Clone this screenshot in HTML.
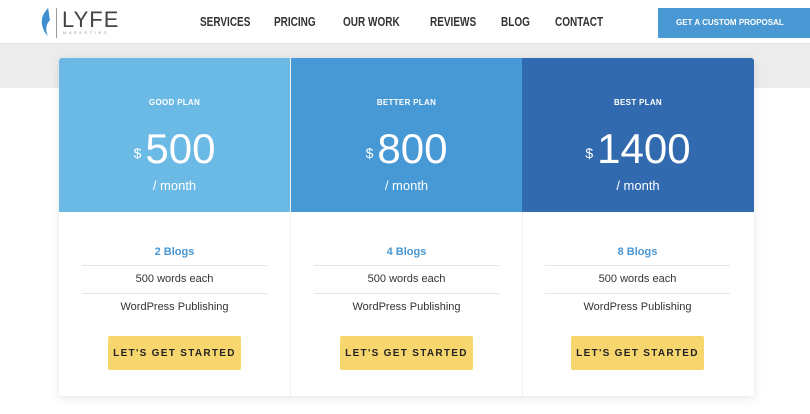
<!DOCTYPE html>
<html><head><style>
*{margin:0;padding:0;box-sizing:border-box}
body{width:810px;height:414px;overflow:hidden;background:#fff;font-family:"Liberation Sans",sans-serif;position:relative}
.hdr{position:absolute;left:0;top:0;width:810px;height:44px;background:#fff;border-bottom:1px solid #e4e4e4}
.band{position:absolute;left:0;top:44px;width:810px;height:44px;background:#ececec}
.nav{position:absolute;top:15px;font-size:12.5px;font-weight:bold;color:#333;transform:scaleX(.8);transform-origin:0 0;white-space:nowrap}
.cta{position:absolute;left:658px;top:8px;width:152px;height:30px;background:#4a98d3;color:#fff;font-size:8px;font-weight:bold;line-height:30px;padding-left:18px}
.card{position:absolute;left:59px;top:58px;width:695px;height:338px;background:#fff;box-shadow:0 2px 10px rgba(0,0,0,.1);border-radius:3px;overflow:hidden}
.col{position:absolute;top:0;width:232px;height:338px;text-align:center;border-right:1px solid #f0f0f0}
.top{height:154px;color:#fff;position:relative}
.lbl{position:absolute;top:40px;width:100%;font-size:8px;font-weight:bold;letter-spacing:.3px}
.pr{position:absolute;top:67px;width:100%;font-size:42px;line-height:48px}
.pr sup{font-size:14px;vertical-align:top;position:relative;top:4px;margin-right:4px}
.mo{position:absolute;top:120px;width:100%;font-size:13px}
.f{position:absolute;left:23px;width:185px;font-size:11px;color:#333}
.b1{top:188px;color:#4a98d3;font-weight:bold}
.ln{position:absolute;left:23px;width:185px;height:1px;background:#e6e6e6}
.btn{position:absolute;left:49px;top:278px;width:133px;height:34px;background:#f7d66e;border-radius:2px;font-size:10px;font-weight:bold;letter-spacing:1.3px;line-height:36px;color:#222}
</style></head><body>
<div class="hdr"></div>
<svg style="position:absolute;left:40px;top:8px" width="14" height="28" viewBox="0 0 14 28"><path d="M8 0C3 6 0 11 3 20c1 4 3 6 5 8C5 22 6 16 10 12 9 8 9 4 8 0z" fill="#3f8fd0"/></svg>
<div style="position:absolute;left:56px;top:8px;width:1px;height:30px;background:#999"></div>
<div style="position:absolute;left:62px;top:7px;font-size:22px;color:#444;letter-spacing:1px">LYFE</div>
<div style="position:absolute;left:63px;top:30px;font-size:4px;color:#999;letter-spacing:2.5px">MARKETING</div>
<div class="nav" style="left:200px">SERVICES</div>
<div class="nav" style="left:274px">PRICING</div>
<div class="nav" style="left:343px">OUR WORK</div>
<div class="nav" style="left:430px">REVIEWS</div>
<div class="nav" style="left:501px">BLOG</div>
<div class="nav" style="left:555px">CONTACT</div>
<div class="cta">GET A CUSTOM PROPOSAL</div>
<div class="band"></div>
<div class="card">
<div class="col" style="left:0"><div class="top" style="background:#6bbae6"><div class="lbl">GOOD PLAN</div><div class="pr"><sup>$</sup>500</div><div class="mo">/ month</div></div>
<div class="f b1">2 Blogs</div><div class="ln" style="top:207px"></div><div class="f" style="top:215px">500 words each</div><div class="ln" style="top:235px"></div><div class="f" style="top:243px">WordPress Publishing</div><div class="btn">LET'S GET STARTED</div></div>
<div class="col" style="left:232px"><div class="top" style="background:#4699d4"><div class="lbl">BETTER PLAN</div><div class="pr"><sup>$</sup>800</div><div class="mo">/ month</div></div>
<div class="f b1">4 Blogs</div><div class="ln" style="top:207px"></div><div class="f" style="top:215px">500 words each</div><div class="ln" style="top:235px"></div><div class="f" style="top:243px">WordPress Publishing</div><div class="btn">LET'S GET STARTED</div></div>
<div class="col" style="left:463px;border:none"><div class="top" style="background:#316aae"><div class="lbl">BEST PLAN</div><div class="pr"><sup>$</sup>1400</div><div class="mo">/ month</div></div>
<div class="f b1">8 Blogs</div><div class="ln" style="top:207px"></div><div class="f" style="top:215px">500 words each</div><div class="ln" style="top:235px"></div><div class="f" style="top:243px">WordPress Publishing</div><div class="btn">LET'S GET STARTED</div></div>
</div>
</body></html>
